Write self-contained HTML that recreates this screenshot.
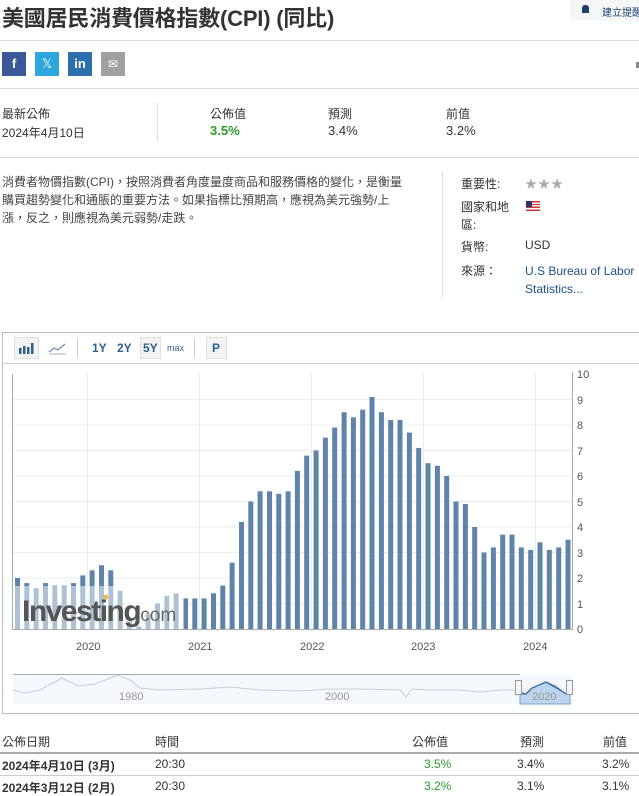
<!DOCTYPE html>
<html><head><meta charset="utf-8">
<style>
*{margin:0;padding:0;box-sizing:border-box}
body{width:639px;height:796px;overflow:hidden;background:#fff;font-family:"Liberation Sans","Noto Sans CJK TC",sans-serif;color:#333;position:relative}
.a{position:absolute;white-space:nowrap}
.hr{position:absolute;left:0;width:639px;height:1px;background:#ddd}
.sb{position:absolute;top:52px;width:24px;height:24px;color:#fff;font-weight:bold;font-size:13px;text-align:center;line-height:24px}
.t12{font-size:12px}
.lbl{font-size:12px;color:#333}
</style></head><body>
<div class="a" style="left:2px;top:1px;font-size:22px;color:#333;font-weight:bold;letter-spacing:-0.2px">美國居民消費價格指數(CPI) (同比)</div>
<div class="a" style="left:570px;top:0;width:69px;height:21px;background:#f5f6f8"></div>
<div class="a" style="left:582px;top:5px;width:7px;height:8px;background:#1d3f6e;border-radius:3px 3px 0 0"></div>
<div class="a" style="left:602px;top:4px;font-size:10px;color:#1d3f6e">建立提醒</div>
<div class="hr" style="top:40px"></div>
<div class="sb" style="left:2px;background:#3b5998">f</div>
<div class="sb" style="left:35px;background:#2da5dd;font-weight:normal">𝕏</div>
<div class="sb" style="left:68px;background:#2d6fac">in</div>
<div class="sb" style="left:101px;background:#a0a0a0;font-weight:normal;font-size:12px">✉</div>
<div class="a" style="left:636px;top:62px;width:3px;height:6px;background:#888"></div>
<div class="hr" style="top:88px"></div>
<div class="a lbl" style="left:2px;top:105px">最新公佈</div>
<div class="a lbl" style="left:2px;top:124px">2024年4月10日</div>
<div class="a" style="left:157px;top:103px;width:1px;height:38px;background:#ddd"></div>
<div class="a lbl" style="left:210px;top:105px">公佈值</div>
<div class="a" style="left:210px;top:123px;font-size:13px;font-weight:bold;color:#2a9d2a">3.5%</div>
<div class="a lbl" style="left:328px;top:105px">預測</div>
<div class="a" style="left:328px;top:123px;font-size:13px">3.4%</div>
<div class="a lbl" style="left:446px;top:105px">前值</div>
<div class="a" style="left:446px;top:123px;font-size:13px">3.2%</div>
<div class="hr" style="top:157px"></div>
<div class="a" style="left:2px;top:173px;font-size:12px;line-height:18px;color:#444;white-space:normal;width:404px">消費者物價指數(CPI)，按照消費者角度量度商品和服務價格的變化，是衡量購買趨勢變化和通脹的重要方法。如果指標比預期高，應視為美元強勢/上漲，反之，則應視為美元弱勢/走跌。</div>
<div class="a" style="left:442px;top:172px;width:1px;height:126px;background:#ddd"></div>
<div class="a lbl" style="left:461px;top:175px">重要性:</div>
<div class="a" style="left:525px;top:175px;font-size:12px;color:#aaa;letter-spacing:1px">★★★</div>
<div class="a lbl" style="left:461px;top:198px;line-height:18px;white-space:normal;width:52px">國家和地區:</div>
<div class="a" style="left:526px;top:201px;width:14px;height:10px;background:repeating-linear-gradient(#c33 0 1.4px,#fff 1.4px 2.8px)"><div style="width:6px;height:6px;background:#336"></div></div>
<div class="a lbl" style="left:461px;top:238px">貨幣:</div>
<div class="a t12" style="left:525px;top:238px">USD</div>
<div class="a lbl" style="left:461px;top:262px">來源：</div>
<div class="a t12" style="left:525px;top:262px;line-height:18px;color:#1d4f8c">U.S Bureau of Labor<br>Statistics...</div>

<div class="a" style="left:2px;top:332px;width:640px;height:382px;border:1px solid #bbb"></div>
<div class="a" style="left:3px;top:363px;width:636px;height:1px;background:#ccc"></div>
<div class="a" style="left:14px;top:337px;width:25px;height:22px;border:1px solid #ddd;background:#f3f3f3"></div>
<svg class="a" style="left:18px;top:341px" width="20" height="14"><g fill="#2d5f8f"><rect x="1" y="7" width="2.5" height="6"/><rect x="5" y="5" width="2.5" height="8"/><rect x="9" y="6" width="2.5" height="7"/><rect x="13" y="2" width="2.5" height="11"/></g></svg>
<svg class="a" style="left:48px;top:340px" width="20" height="16"><path d="M1 12 L6 8 L10 10 L17 4" stroke="#6b8fb3" fill="none" stroke-width="1.2"/><line x1="1" y1="14" x2="18" y2="14" stroke="#aaa"/></svg>
<div class="a" style="left:77px;top:338px;width:1px;height:20px;background:#ccc"></div>
<div class="a" style="left:92px;top:341px;font-size:12px;font-weight:bold;color:#2d5f8f">1Y</div>
<div class="a" style="left:117px;top:341px;font-size:12px;font-weight:bold;color:#2d5f8f">2Y</div>
<div class="a" style="left:140px;top:337px;width:21px;height:22px;border:1px solid #ddd;background:#f3f3f3"></div>
<div class="a" style="left:143px;top:341px;font-size:12px;font-weight:bold;color:#2d5f8f">5Y</div>
<div class="a" style="left:167px;top:343px;font-size:9px;color:#2d5f8f">max</div>
<div class="a" style="left:194px;top:338px;width:1px;height:20px;background:#ccc"></div>
<div class="a" style="left:206px;top:337px;width:21px;height:22px;border:1px solid #ddd;background:#f3f3f3"></div>
<div class="a" style="left:212px;top:341px;font-size:12px;font-weight:bold;color:#2d5f8f">P</div>

<svg class="a" style="left:0;top:0" width="639" height="796">
<g stroke="#ececec" stroke-width="1">
<line x1="13" x2="572" y1="399.5" y2="399.5"/><line x1="13" x2="572" y1="425" y2="425"/><line x1="13" x2="572" y1="450.5" y2="450.5"/><line x1="13" x2="572" y1="476" y2="476"/><line x1="13" x2="572" y1="501.5" y2="501.5"/><line x1="13" x2="572" y1="527" y2="527"/><line x1="13" x2="572" y1="552.5" y2="552.5"/><line x1="13" x2="572" y1="578" y2="578"/><line x1="13" x2="572" y1="603.5" y2="603.5"/>
<line x1="87.5" x2="87.5" y1="374" y2="629"/><line x1="199.5" x2="199.5" y1="374" y2="629"/><line x1="311.5" x2="311.5" y1="374" y2="629"/><line x1="423.5" x2="423.5" y1="374" y2="629"/><line x1="535.5" x2="535.5" y1="374" y2="629"/>
</g>
<line x1="12.5" x2="12.5" y1="374" y2="630" stroke="#aaa"/>
<line x1="572.5" x2="572.5" y1="372" y2="630" stroke="#aaa"/>
<line x1="12" x2="573" y1="629.5" y2="629.5" stroke="#aaa"/>
<g transform="translate(0,629) scale(1,-1)" fill="#5f83aa">
<rect x="15" width="5" height="51"/><rect x="24.3" width="5" height="45.9"/><rect x="33.7" width="5" height="40.8"/><rect x="43" width="5" height="45.9"/><rect x="52.3" width="5" height="43.4"/><rect x="61.7" width="5" height="43.4"/><rect x="71" width="5" height="45.9"/><rect x="80.3" width="5" height="53.6"/><rect x="89.6" width="5" height="58.7"/><rect x="99" width="5" height="63.8"/>
<rect x="108.3" width="5" height="58.7"/><rect x="117.6" width="5" height="38.3"/><rect x="127" width="5" height="7.7"/><rect x="136.3" width="5" height="2.6"/><rect x="145.6" width="5" height="15.3"/><rect x="155" width="5" height="25.5"/><rect x="164.3" width="5" height="33.2"/><rect x="173.6" width="5" height="35.7"/><rect x="183" width="5" height="30.6"/><rect x="192.3" width="5" height="30.6"/>
<rect x="201.6" width="5" height="30.6"/><rect x="211" width="5" height="35.7"/><rect x="220.3" width="5" height="43.4"/><rect x="229.6" width="5" height="66.3"/><rect x="239" width="5" height="107.1"/><rect x="248.3" width="5" height="127.5"/><rect x="257.6" width="5" height="137.7"/><rect x="267" width="5" height="137.7"/><rect x="276.3" width="5" height="135.2"/><rect x="285.6" width="5" height="137.7"/>
<rect x="294.9" width="5" height="158.1"/><rect x="304.2" width="5" height="173.4"/><rect x="313.6" width="5" height="178.5"/><rect x="322.9" width="5" height="191.3"/><rect x="332.2" width="5" height="201.5"/><rect x="341.6" width="5" height="216.8"/><rect x="350.9" width="5" height="211.7"/><rect x="360.2" width="5" height="219.3"/><rect x="369.5" width="5" height="232.1"/><rect x="378.9" width="5" height="216.8"/>
<rect x="388.2" width="5" height="209.1"/><rect x="397.5" width="5" height="209.1"/><rect x="406.9" width="5" height="196.4"/><rect x="416.2" width="5" height="181.1"/><rect x="425.5" width="5" height="165.8"/><rect x="434.9" width="5" height="163.2"/><rect x="444.2" width="5" height="153"/><rect x="453.5" width="5" height="127.5"/><rect x="462.9" width="5" height="125"/><rect x="472.2" width="5" height="102"/>
<rect x="481.5" width="5" height="76.5"/><rect x="490.9" width="5" height="81.6"/><rect x="500.2" width="5" height="94.4"/><rect x="509.5" width="5" height="94.4"/><rect x="518.8" width="5" height="81.6"/><rect x="528.2" width="5" height="79.1"/><rect x="537.5" width="5" height="86.7"/><rect x="546.8" width="5" height="79.1"/><rect x="556.2" width="5" height="81.6"/><rect x="565.5" width="5" height="89.3"/>
</g>
<rect x="13" y="586" width="171" height="43" fill="#fff" opacity="0.5"/>
<text x="22" y="621" font-family="Liberation Sans,sans-serif" font-size="30" font-weight="bold" fill="#555" letter-spacing="-1.5">Investing</text>
<text x="135" y="621" font-family="Liberation Sans,sans-serif" font-size="19" fill="#666">.com</text>
<circle cx="106" cy="597" r="2.5" fill="#f3b94a"/>
<g font-family="Liberation Sans,sans-serif" font-size="11" fill="#555">
<text x="577" y="378">10</text><text x="577" y="404">9</text><text x="577" y="429">8</text><text x="577" y="455">7</text><text x="577" y="480">6</text><text x="577" y="506">5</text><text x="577" y="531">4</text><text x="577" y="557">3</text><text x="577" y="582">2</text><text x="577" y="608">1</text><text x="577" y="633">0</text>
<text x="76" y="650">2020</text><text x="188" y="650">2021</text><text x="300" y="650">2022</text><text x="411" y="650">2023</text><text x="523" y="650">2024</text>
</g>
<line x1="13" x2="520" y1="674.5" y2="674.5" stroke="#aaa"/>
<rect x="13" y="675" width="560" height="29" fill="#f4f7fb"/>
<path d="M13 690 L25 693 L40 690 L62 678 L78 686 L95 684 L118 675 L130 680 L140 688 L160 690 L200 689 L230 687 L260 690 L300 691 L330 689 L360 689 L400 690 L406 697 L412 689 L430 690 L460 690 L480 692 L500 690 L520 690 L525 694 L532 688 L546 682 L560 690 L566 693" stroke="#c3cfdc" fill="none"/>
<path d="M520 704 L520 692 L526 694 L532 688 L546 682 L556 686 L566 694 L570 694 L570 704 Z" fill="#bcd4ee" stroke="#7aa3cc"/>
<path d="M520 694 L526 694 L532 688 L546 682 L560 690 L566 694" stroke="#3a6a9a" fill="none" stroke-width="1.3"/>
<rect x="515.5" y="680.5" width="6" height="14" fill="#f4f4f4" stroke="#999"/>
<rect x="566.5" y="680.5" width="6" height="14" fill="#f4f4f4" stroke="#999"/>
<g font-family="Liberation Sans,sans-serif" font-size="11" fill="#999"><text x="119" y="700">1980</text><text x="325" y="700">2000</text><text x="532" y="700">2020</text></g>
</svg>

<div class="a lbl" style="left:2px;top:733px">公佈日期</div>
<div class="a lbl" style="left:155px;top:733px">時間</div>
<div class="a lbl" style="left:412px;top:733px">公佈值</div>
<div class="a lbl" style="left:520px;top:733px">預測</div>
<div class="a lbl" style="left:603px;top:733px">前值</div>
<div class="a" style="left:0;top:752px;width:639px;height:2px;background:#aaa"></div>
<div class="a" style="left:2px;top:757px;font-size:12px;font-weight:bold">2024年4月10日 (3月)</div>
<div class="a t12" style="left:155px;top:757px">20:30</div>
<div class="a t12" style="left:424px;top:757px;color:#2a9d2a">3.5%</div>
<div class="a t12" style="left:517px;top:757px">3.4%</div>
<div class="a t12" style="left:602px;top:757px">3.2%</div>
<div class="a" style="left:0;top:775px;width:639px;height:1px;background:#ccc"></div>
<div class="a" style="left:2px;top:779px;font-size:12px;font-weight:bold">2024年3月12日 (2月)</div>
<div class="a t12" style="left:155px;top:779px">20:30</div>
<div class="a t12" style="left:424px;top:779px;color:#2a9d2a">3.2%</div>
<div class="a t12" style="left:517px;top:779px">3.1%</div>
<div class="a t12" style="left:602px;top:779px">3.1%</div>
</body></html>
